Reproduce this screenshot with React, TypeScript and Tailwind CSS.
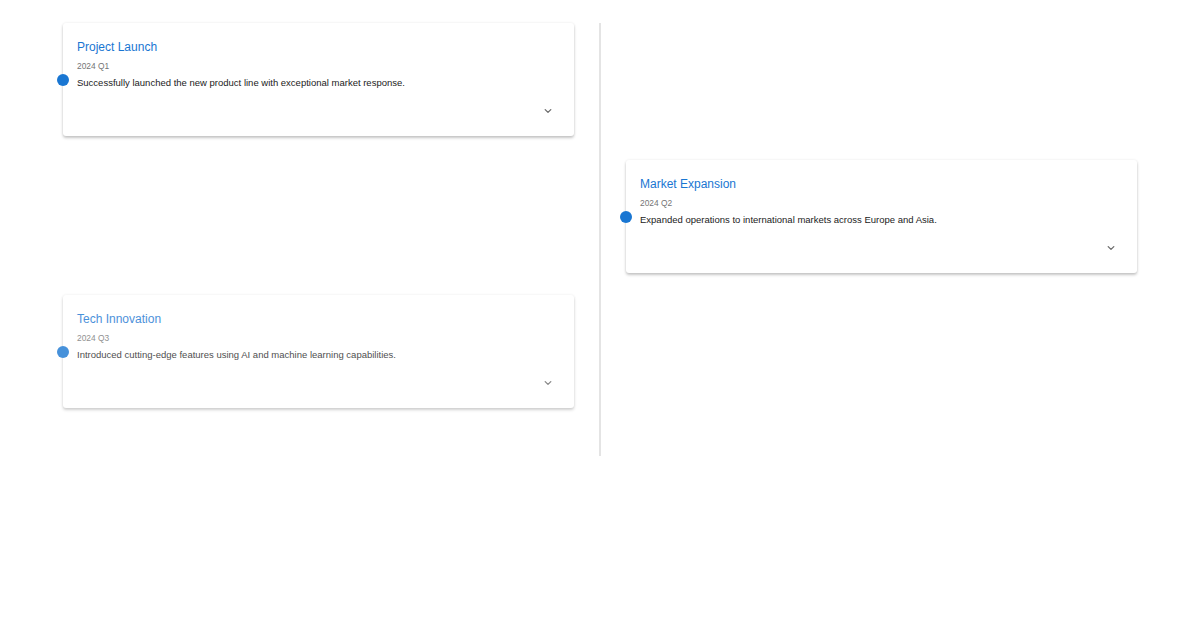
const events = [
  { title: "Project Launch", date: "2024 Q1", text: "Successfully launched the new product line with exceptional market response.", side: "left", faded: false },
  { title: "Market Expansion", date: "2024 Q2", text: "Expanded operations to international markets across Europe and Asia.", side: "right", faded: false },
  { title: "Tech Innovation", date: "2024 Q3", text: "Introduced cutting-edge features using AI and machine learning capabilities.", side: "left", faded: true },
];

function Chevron() {
  return (
    <svg width="10" height="10" viewBox="0 0 10 10" fill="none" stroke="#6b6b6b" strokeWidth="1.3" strokeLinecap="round" strokeLinejoin="round">
      <path d="M2.2 3.6 5 6.4l2.8-2.8" />
    </svg>
  );
}

function EventCard({ title, date, text, faded }: { title: string; date: string; text: string; faded: boolean }) {
  return (
    <div className={`relative h-[113px] bg-white rounded-[3px] shadow-[0_2px_3px_rgba(0,0,0,0.22),0_0_3px_rgba(0,0,0,0.07)] px-[14px] pt-[17px] ${faded ? "opacity-80" : ""}`}>
      <span className="absolute left-[-6px] top-[51px] w-[12px] h-[12px] rounded-full bg-[#1976d2]" />
      <div className="text-[12px] leading-[14px] text-[#1976d2]">{title}</div>
      <div className="mt-[7px] text-[8.4px] leading-[10px] text-[#757575]">{date}</div>
      <div className="mt-[6px] text-[9.5px] leading-[12px] text-[#222]">{text}</div>
      <div className="absolute right-[21px] bottom-[20px] flex items-center justify-center">
        <Chevron />
      </div>
    </div>
  );
}

export default function App() {
  return (
    <div className="w-[1200px] h-[630px] bg-white pt-[23px]" style={{ fontFamily: '"Liberation Sans", Arial, sans-serif' }}>
      <div className="grid grid-cols-[599px_2px_599px] grid-rows-[113px_24px_113px_22px_113px_48px]">
        <div className="col-start-2 row-start-1 row-span-6 bg-[#e4e4e4]" />
        {events.map((ev, i) => (
          <div
            key={ev.title}
            className={`${ev.side === "left" ? "col-start-1 pl-[63px] pr-[25px]" : "col-start-3 pl-[25px] pr-[63px]"} ${i === 0 ? "row-start-1" : i === 1 ? "row-start-3" : "row-start-5"}`}
          >
            <EventCard title={ev.title} date={ev.date} text={ev.text} faded={ev.faded} />
          </div>
        ))}
      </div>
    </div>
  );
}
